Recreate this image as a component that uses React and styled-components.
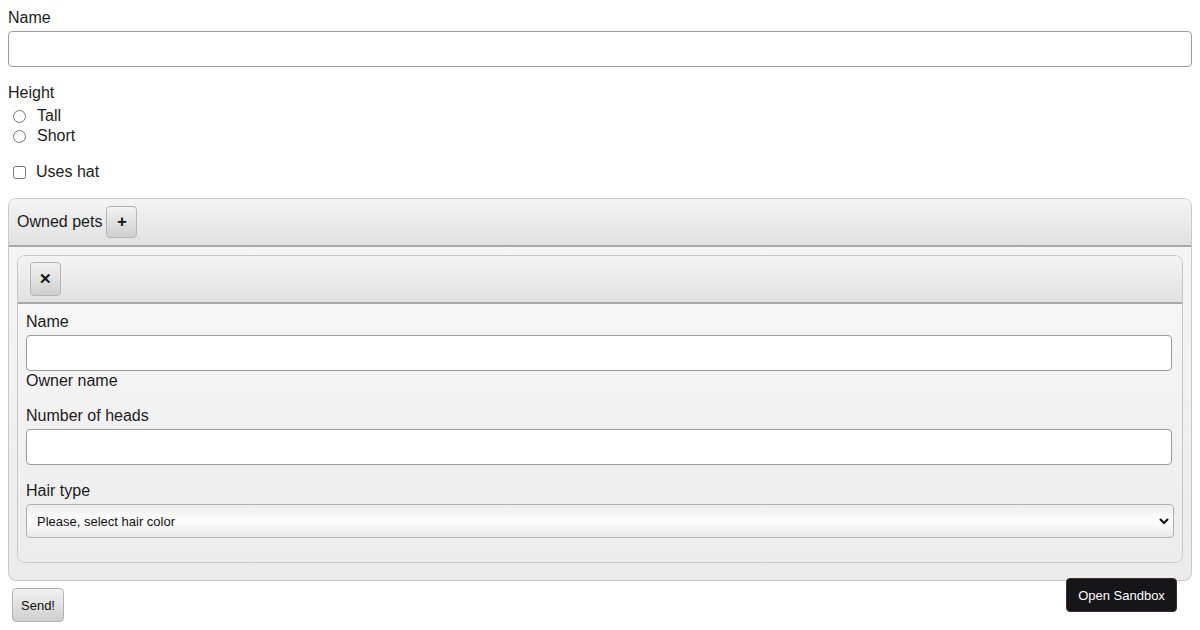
import React from 'react';
import styled, { createGlobalStyle } from 'styled-components';

const GlobalStyle = createGlobalStyle`
  body {
    margin: 8px;
    font-family: "Liberation Sans", Arial, sans-serif;
    font-size: 16px;
    color: #1c1c1c;
    background: #fff;
  }
`;

const Form = styled.form`
  display: flex;
  flex-direction: column;
`;

const Field = styled.div`
  display: flex;
  flex-direction: column;
  margin-bottom: ${p => p.gap || '16px'};
`;

const Label = styled.label`
  display: block;
  line-height: 19px;
  margin-bottom: ${p => (p.plain ? '0' : '4px')};
`;

const TextInput = styled.input`
  box-sizing: border-box;
  height: 36px;
  width: ${p => (p.inset ? 'calc(100% - 2px)' : '100%')};
  margin: 0;
  padding: 0 8px;
  border: 1px solid #9b9b9b;
  border-radius: 4px;
  background: #fff;
  font: inherit;
`;

const ChoiceGroup = styled.div`
  display: flex;
  flex-direction: column;
  padding-top: 4px;
`;

const Choice = styled.label`
  display: flex;
  align-items: center;
  height: 20px;
  gap: ${p => (p.box ? '10px' : '11px')};
  padding-left: 5px;
`;

const RadioMark = styled.input`
  margin: 0;
  width: 13px;
  height: 13px;
`;

const CheckMark = styled.input`
  margin: 0;
  width: 13px;
  height: 13px;
`;

const Panel = styled.div`
  border: 1px solid #c8c8c8;
  border-radius: 8px;
  background: linear-gradient(#f6f6f6, #ebebeb);
  overflow: hidden;
  margin-bottom: ${p => (p.nested ? '8px' : '0')};
`;

const PanelHeader = styled.div`
  display: flex;
  align-items: center;
  gap: 4px;
  box-sizing: border-box;
  height: 48px;
  padding: 0 ${p => (p.nested ? '12px' : '8px')};
  background: linear-gradient(#f4f4f4, #e1e1e1);
  border-bottom: 2px solid #a8a8a8;
`;

const PanelBody = styled.div`
  padding: ${p => (p.nested ? '8px' : '8px 8px 9px')};
  background: ${p => (p.nested ? 'linear-gradient(#f6f6f6, #ececec)' : 'transparent')};
`;

const Button = styled.button`
  box-sizing: border-box;
  display: inline-flex;
  align-items: center;
  justify-content: center;
  width: ${p => p.w || 'auto'};
  height: ${p => p.h || '34px'};
  padding: 0 8px;
  border: 1px solid #b4b4b4;
  border-radius: 4px;
  background: linear-gradient(#f2f2f2, #cfcfcf);
  color: #111;
  font-family: "Liberation Sans", Arial, sans-serif;
  font-size: ${p => p.size || '13px'};
  font-weight: ${p => (p.bold ? 700 : 400)};
`;

const SelectWrap = styled.div`
  position: relative;
`;

const Select = styled.select`
  box-sizing: border-box;
  width: 100%;
  height: 34px;
  padding: 0 10px;
  border: 1px solid #b2b2b2;
  border-radius: 4px;
  appearance: none;
  background: linear-gradient(#ececec, #fafafa 35%, #fcfcfc 55%, #e8e8e8);
  color: #111;
  font-family: "Liberation Sans", Arial, sans-serif;
  font-size: 13px;
`;

const Chevron = styled.svg`
  position: absolute;
  right: 4px;
  top: 13px;
  pointer-events: none;
`;

const Actions = styled.div`
  padding: 7px 0 0 4px;
`;

const SandboxLink = styled.a`
  position: fixed;
  right: 23px;
  bottom: 18px;
  box-sizing: border-box;
  width: 111px;
  height: 34px;
  display: flex;
  align-items: center;
  justify-content: center;
  background: #151418;
  border: 1px solid #3b2c30;
  border-radius: 4px;
  color: #fff;
  font-family: "Liberation Sans", Arial, sans-serif;
  font-size: 13px;
  text-decoration: none;
`;

export default function App() {
  return (
    <>
      <GlobalStyle />
      <Form onSubmit={e => e.preventDefault()}>
        <Field>
          <Label>Name</Label>
          <TextInput type="text" />
        </Field>

        <Field>
          <Label plain>Height</Label>
          <ChoiceGroup>
            <Choice>
              <RadioMark type="radio" name="height" />
              Tall
            </Choice>
            <Choice>
              <RadioMark type="radio" name="height" />
              Short
            </Choice>
          </ChoiceGroup>
        </Field>

        <Field>
          <Choice box>
            <CheckMark type="checkbox" />
            Uses hat
          </Choice>
        </Field>

        <Panel>
          <PanelHeader>
            Owned pets
            <Button type="button" w="31px" h="32px" size="17px" bold>+</Button>
          </PanelHeader>
          <PanelBody>
            <Panel nested>
              <PanelHeader nested>
                <Button type="button" w="31px" h="34px" size="15px" bold>✕</Button>
              </PanelHeader>
              <PanelBody nested>
                <Field gap="0">
                  <Label>Name</Label>
                  <TextInput type="text" inset />
                </Field>
                <Field>
                  <Label plain>Owner name</Label>
                </Field>
                <Field>
                  <Label>Number of heads</Label>
                  <TextInput type="text" inset />
                </Field>
                <Field>
                  <Label>Hair type</Label>
                  <SelectWrap>
                    <Select defaultValue="">
                      <option value="">Please, select hair color</option>
                      <option value="long">Long</option>
                      <option value="short">Short</option>
                    </Select>
                    <Chevron width="12" height="8" viewBox="0 0 12 8">
                      <path d="M2 2l4 4 4-4" fill="none" stroke="#111" strokeWidth="2.2" />
                    </Chevron>
                  </SelectWrap>
                </Field>
              </PanelBody>
            </Panel>
          </PanelBody>
        </Panel>

        <Actions>
          <Button type="submit" w="52px">Send!</Button>
        </Actions>
      </Form>
      <SandboxLink href="#">Open Sandbox</SandboxLink>
    </>
  );
}
